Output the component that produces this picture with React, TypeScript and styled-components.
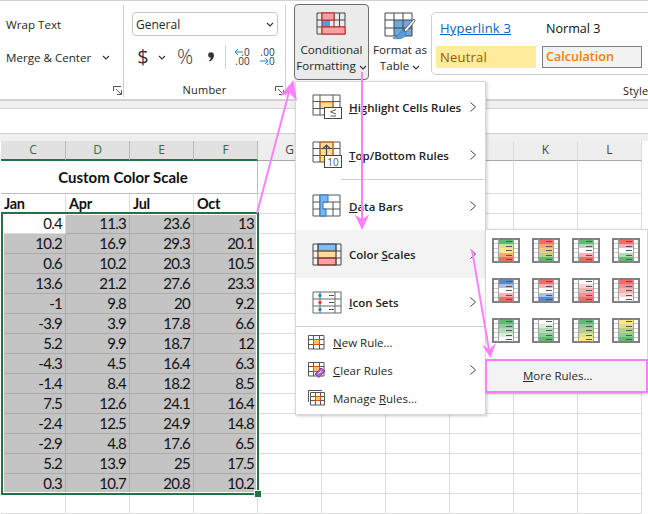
import React from "react";
import styled, { createGlobalStyle } from "styled-components";

const GlobalStyle = createGlobalStyle`
  html, body { margin: 0; padding: 0; background: #fff; }
  #root { width: 648px; height: 514px; overflow: hidden; }
`;

const uiFont = `"Open Sans", "Noto Sans", sans-serif`;
const cellFont = `Lato, "Liberation Sans", sans-serif`;
const columns = "65px repeat(9, 64px)";

const Page = styled.div`
  position: relative;
  width: 648px;
  height: 514px;
  overflow: hidden;
  background: #fff;
  font-family: ${uiFont};
  font-size: 12px;
  color: #262626;
`;

/* ribbon */
const Ribbon = styled.div`
  display: flex;
  height: 101px;
  box-sizing: border-box;
  border-top: 1px solid #d2d2d2;
  border-bottom: 2px solid #d2d2d2;
`;

const Group = styled.div<{ $w: number; $divider?: boolean }>`
  position: relative;
  flex: none;
  box-sizing: border-box;
  width: ${(p) => p.$w}px;
  height: 92px;
  margin-top: 4px;
  border-right: ${(p) => (p.$divider ? "1px solid #d0d0d0" : "none")};
`;

const GroupLabel = styled.div`
  position: absolute;
  left: 0;
  right: 0;
  top: 78px;
  text-align: center;
  line-height: 14px;
  font-size: 11px;
  letter-spacing: 0.2px;
`;

const Launcher = styled.svg`
  position: absolute;
  right: 1px;
  top: 81px;
`;

const AlignRow = styled.div`
  display: flex;
  align-items: center;
  justify-content: space-between;
  height: 33px;
  padding: 0 13px 0 6px;
  white-space: nowrap;
  font-size: 11.6px;
  &:first-child { margin-top: 3px; }
`;

const NumberPane = styled.div`
  display: flex;
  flex-direction: column;
  padding: 7px 7px 0 8px;
`;

const Combo = styled.div`
  display: flex;
  align-items: center;
  justify-content: space-between;
  box-sizing: border-box;
  width: 146px;
  height: 24px;
  padding: 0 3px 0 3px;
  border: 1px solid #c6c6c6;
  border-radius: 4px;
`;

const NumberTools = styled.div`
  display: flex;
  align-items: center;
  height: 24px;
  margin-top: 9px;
`;

const ToolGlyph = styled.span<{ $w: number; $size: number; $light?: boolean }>`
  display: block;
  flex: none;
  width: ${(p) => p.$w}px;
  text-align: center;
  font-size: ${(p) => p.$size}px;
  font-weight: ${(p) => (p.$light ? 300 : 400)};
  line-height: 24px;
  color: #333;
`;

const CaretSlot = styled.span`
  display: flex;
  margin-left: 4px;
`;

const CommaSlot = styled.svg`
  flex: none;
  width: 14px;
  height: 24px;
`;

const ToolDivider = styled.span`
  flex: none;
  width: 1px;
  height: 24px;
  margin: 0 2px 0 7px;
  background: #d0d0d0;
`;

const Decimal = styled.span`
  position: relative;
  display: block;
  flex: none;
  width: 25px;
  height: 24px;
  font-size: 10px;
  line-height: 9px;
  text-align: right;
  padding-top: 3px;
  box-sizing: border-box;
  padding-right: 3px;
  color: #333;
  letter-spacing: 0.2px;
`;

const DecimalArrow = styled.svg<{ $low?: boolean }>`
  position: absolute;
  left: 6px;
  top: ${(p) => (p.$low ? 12 : 3)}px;
`;

const BigButton = styled.div<{ $active?: boolean; $w: number }>`
  display: flex;
  flex-direction: column;
  align-items: center;
  flex: none;
  box-sizing: border-box;
  width: ${(p) => p.$w}px;
  height: 76px;
  margin-top: 3px;
  border: 1px solid ${(p) => (p.$active ? "#6e6e6e" : "transparent")};
  border-radius: 4px;
  background: ${(p) => (p.$active ? "#ebebeb" : "transparent")};
  text-align: center;
  line-height: 16px;
  font-size: 11.6px;
  white-space: nowrap;
`;

const BigIconSlot = styled.div<{ $shift: number }>`
  height: 30px;
  margin: 7px ${(p) => p.$shift}px 0 0;
`;

const Gallery = styled.div`
  display: grid;
  grid-template-columns: 100px 100px;
  grid-template-rows: 30px 22px;
  row-gap: 3px;
  column-gap: 6px;
  align-items: center;
  flex: none;
  box-sizing: border-box;
  width: 260px;
  height: 63px;
  margin: 11px 0 0 3px;
  padding: 0 0 0 4px;
  border: 1px solid #cfcfcf;
  border-radius: 5px;
`;

const StyleLink = styled.span`
  justify-self: start;
  margin-left: 4px;
  font-size: 13px;
  color: #0563c1;
  text-decoration: underline;
  letter-spacing: 0.2px;
`;

const StyleNormal = styled.span`
  margin-left: 4px;
  font-size: 12.6px;
  color: #111;
`;

const StyleNeutral = styled.span`
  height: 22px;
  padding-left: 4px;
  line-height: 22px;
  font-size: 13px;
  background: #ffeb9c;
  color: #9c5700;
  letter-spacing: 0.2px;
`;

const StyleCalc = styled.span`
  box-sizing: border-box;
  height: 22px;
  padding-left: 3px;
  line-height: 20px;
  font-size: 12.6px;
  font-weight: 600;
  background: #f2f2f2;
  border: 1px solid #7f7f7f;
  color: #fa7d00;
`;

const StylesLabel = styled.span`
  position: absolute;
  left: 623px;
  top: 84px;
  font-size: 11px;
  line-height: 14px;
  letter-spacing: 0.2px;
`;

/* formula bar strip */
const Strip = styled.div<{ $h: number }>`
  height: ${(p) => p.$h}px;
  background: #f0f0f0;
`;

const FormulaBar = styled.div`
  box-sizing: border-box;
  height: 26px;
  border-top: 1px solid #d2d2d2;
  border-bottom: 1px solid #cfcfcf;
  background: #fff;
`;

/* sheet */
const Sheet = styled.div`
  padding-left: 1px;
`;

const ColHead = styled.div`
  display: grid;
  grid-template-columns: ${columns};
  height: 20px;
`;

const ColLabel = styled.div<{ $selected?: boolean }>`
  box-sizing: border-box;
  height: 20px;
  text-align: center;
  font-size: 12px;
  line-height: 18px;
  background: ${(p) => (p.$selected ? "#e1e1e1" : "#eeeeee")};
  color: ${(p) => (p.$selected ? "#217346" : "#444")};
  border-right: 1px solid ${(p) => (p.$selected ? "#b8b8b8" : "#dcdcdc")};
  border-bottom: ${(p) => (p.$selected ? "2px solid #217346" : "1px solid #a8a8a8")};
`;

const Row = styled.div<{ $h: number }>`
  display: grid;
  grid-template-columns: ${columns};
  height: ${(p) => p.$h}px;
`;

const Cell = styled.div<{ $filled?: boolean; $head?: boolean }>`
  box-sizing: border-box;
  padding: 0 3px;
  font-family: ${cellFont};
  font-size: ${(p) => (p.$head ? 14.5 : 15)}px;
  letter-spacing: ${(p) => (p.$head ? -0.3 : -0.7)}px;
  line-height: 19px;
  color: #111;
  overflow: hidden;
  text-align: ${(p) => (p.$head ? "left" : "right")};
  font-weight: ${(p) => (p.$head ? 700 : 400)};
  background: ${(p) => (p.$filled ? "#c4c4c4" : "#fff")};
  border-right: 1px solid ${(p) => (p.$filled ? "#ababab" : "#dcdcdc")};
  border-bottom: 1px solid ${(p) => (p.$filled ? "#ababab" : "#dcdcdc")};
`;

const TitleCell = styled.div`
  grid-column: span 4;
  box-sizing: border-box;
  padding-right: 12px;
  text-align: center;
  font-family: ${cellFont};
  font-weight: 700;
  font-size: 15px;
  line-height: 32px;
  color: #111;
  border-right: 1px solid #bdbdbd;
  border-bottom: 1px solid #bdbdbd;
`;

const Selection = styled.div`
  position: absolute;
  left: 1px;
  top: 212px;
  box-sizing: border-box;
  width: 258px;
  height: 283px;
  border: 2px solid #217346;
  box-shadow: inset 0 0 0 1px #fff;
  pointer-events: none;
`;

const FillHandle = styled.div`
  position: absolute;
  right: -5px;
  bottom: -5px;
  width: 6px;
  height: 6px;
  background: #217346;
  border: 1px solid #fff;
`;

/* menus */
const Menu = styled.div`
  position: absolute;
  left: 295px;
  top: 81px;
  box-sizing: border-box;
  width: 191px;
  height: 334px;
  padding-top: 1px;
  background: #fff;
  border: 1px solid #d8d8d8;
  box-shadow: 1px 1px 3px rgba(0, 0, 0, 0.22);
`;

const LargeItem = styled.div<{ $hover?: boolean }>`
  display: flex;
  align-items: center;
  height: 48px;
  padding: 0 8px 0 16px;
  background: ${(p) => (p.$hover ? "#f3f3f3" : "transparent")};
`;

const LargeLabel = styled.span`
  flex: 1;
  margin-left: 7px;
  font-weight: 600;
  font-size: 11.5px;
  color: #222;
  white-space: nowrap;
`;

const SmallItem = styled.div`
  display: flex;
  align-items: center;
  height: 28px;
  padding: 0 8px 0 12px;
`;

const SmallLabel = styled.span`
  flex: 1;
  margin-left: 8px;
  font-size: 11.5px;
  color: #262626;
`;

const Key = styled.span`
  text-decoration: underline;
`;

const SepShort = styled.div`
  height: 1px;
  margin-left: 45px;
  margin-bottom: 2px;
  background: #d0d0d0;
`;

const SepFull = styled.div`
  height: 1px;
  margin-bottom: 1px;
  background: #d0d0d0;
`;

const SubMenu = styled.div`
  position: absolute;
  left: 485px;
  top: 229px;
  box-sizing: border-box;
  width: 163px;
  height: 164px;
  background: #fff;
  border: 1px solid #d8d8d8;
  box-shadow: 1px 1px 3px rgba(0, 0, 0, 0.22);
`;

const ScaleGrid = styled.div`
  display: grid;
  grid-template-columns: repeat(4, 28px);
  grid-auto-rows: 25px;
  gap: 15px 12px;
  padding: 8px 0 0 6px;
`;

const MoreRules = styled.div`
  position: absolute;
  left: -1px;
  bottom: -1px;
  box-sizing: border-box;
  width: 163px;
  height: 34px;
  padding-left: 36px;
  line-height: 30px;
  font-size: 11.5px;
  background: #f3f3f3;
  border: 2px solid #ff80ff;
`;

const Overlay = styled.svg`
  position: absolute;
  left: 0;
  top: 0;
  pointer-events: none;
`;

/* drawings */
const Chevron = () => (
  <svg width="8" height="12" viewBox="0 0 8 12" fill="none" stroke="#444" strokeWidth="1">
    <path d="M1.5 1.5 L6.5 6 L1.5 10.5" />
  </svg>
);

const Caret = () => (
  <svg width="8" height="5" viewBox="0 0 8 5" fill="none" stroke="#333" strokeWidth="1.1">
    <path d="M1 1 L4 4 L7 1" />
  </svg>
);

const LauncherIcon = () => (
  <Launcher width="9" height="9" viewBox="0 0 9 9" fill="none" stroke="#555" strokeWidth="1">
    <path d="M0.5 5 V0.5 H8 M3 3 L8 8 M8.5 4 V8.5 H4" />
  </Launcher>
);

const CondIcon = () => (
  <svg width="30" height="23" viewBox="0 0 30 23">
    <rect x="6" y="8" width="8" height="7" fill="#5b9bd5" />
    <path d="M1 1 H29 V22 H1 Z M1 8 H29 M1 15 H29 M6 1 V22 M18 1 V22 M23.5 1 V22" fill="none" stroke="#444" strokeWidth="1" />
    <rect x="6" y="1" width="12" height="7" fill="#ff9ea5" stroke="#d81b1b" />
    <rect x="6" y="15" width="23" height="7" fill="#ff9ea5" stroke="#d81b1b" />
  </svg>
);

const TableIcon = () => (
  <svg width="32" height="28" viewBox="0 0 32 28">
    <rect x="10" y="8" width="18" height="16" fill="#6fa8dc" />
    <path d="M1 1 H28 V24 H1 Z M1 8 H28 M1 16 H28 M10 1 V24 M19 1 V24" fill="none" stroke="#444" strokeWidth="1" />
    <path d="M30 7 L20 18 L22 20 L31 9 Z" fill="#fff" stroke="#666" strokeWidth="1" />
    <path d="M19 18 C15 20 16 24 9 26 C15 28 22 26 22 21 Z" fill="#5b9bd5" stroke="#2e75b6" strokeWidth="0.7" />
  </svg>
);

const Grid3 = "M1 1 H28 V21 H1 Z M1 7.5 H28 M1 14.5 H28 M8 1 V21 M21 1 V21";

const HighlightIcon = () => (
  <svg width="30" height="26" viewBox="0 0 30 26">
    <rect x="8" y="8" width="13" height="7" fill="#fcdc97" />
    <path d={Grid3} fill="none" stroke="#555" />
    <path d="M8 14 V8 H21 V14" fill="none" stroke="#d9730d" />
    <rect x="12.5" y="13.5" width="17" height="11" fill="#fff" stroke="#444" />
    <path d="M24 15.5 L18.5 17.8 L24 20 M18.5 22 H24" fill="none" stroke="#555" />
  </svg>
);

const TopBottomIcon = () => (
  <svg width="30" height="28" viewBox="0 0 30 28">
    <rect x="8" y="1" width="13" height="20" fill="#fcdc97" />
    <path d={Grid3} fill="none" stroke="#555" />
    <path d="M8 21 V1 H21 V14" fill="none" stroke="#d9730d" />
    <path d="M14.5 14 V4 M10.5 8 L14.5 4 L18.5 8" fill="none" stroke="#444" strokeWidth="1.2" />
    <rect x="12.5" y="14.5" width="17" height="12" fill="#fff" stroke="#444" />
    <text x="21" y="24.5" textAnchor="middle" fontSize="10" fontFamily="Open Sans" fill="#555">10</text>
  </svg>
);

const DataBarIcon = () => (
  <svg width="30" height="24" viewBox="0 0 30 24">
    <path d="M1 1 H28 V22 H1 Z M1 8 H28 M1 15 H28 M8 1 V22 M21 8 V22" fill="none" stroke="#555" />
    <path d="M6 1 H14 V8 H9 V15 H12 V22 H6 Z" transform="translate(2 0)" fill="#7db6ea" stroke="#1f77c4" />
  </svg>
);

const ColorScaleIcon = () => (
  <svg width="30" height="23" viewBox="0 0 30 23">
    <rect x="6" y="1" width="18" height="7" fill="#84bbec" stroke="#1f77c4" />
    <rect x="6" y="8" width="18" height="7" fill="#fcdc97" stroke="#ea9a2a" />
    <rect x="6" y="15" width="18" height="7" fill="#ff9ea5" stroke="#d81b1b" />
    <path d="M1 1 H29 V22 H1 Z M1 8 H29 M1 15 H29 M6 1 V22 M24 1 V22" fill="none" stroke="#444" />
  </svg>
);

const IconSetIcon = () => (
  <svg width="30" height="23" viewBox="0 0 30 23">
    <path d="M1 1 H29 V22 H1 Z M1 8 H29 M1 15 H29 M8 1 V22 M23 1 V22" fill="none" stroke="#666" />
    <circle cx="8" cy="4.5" r="1.7" fill="#1e88d2" />
    <circle cx="8" cy="11.5" r="1.7" fill="#e83a3a" />
    <circle cx="8" cy="18.5" r="1.7" fill="#1e88d2" />
    <path d="M17 4.5 H22 M17 11.5 H22 M17 18.5 H22" stroke="#555" />
  </svg>
);

const NewRuleIcon = () => (
  <svg width="17" height="15" viewBox="0 0 17 15">
    <path d="M0.5 0.5 H16 V14 H0.5 Z M0.5 4.5 H16 M0.5 9.5 H16 M5.5 0.5 V14 M11.5 0.5 V14" fill="none" stroke="#555" />
    <rect x="5.5" y="4.5" width="6" height="5" fill="#fbc46a" stroke="#e0560f" />
  </svg>
);

const ClearRuleIcon = () => (
  <svg width="17" height="16" viewBox="0 0 17 16">
    <path d="M0.5 0.5 H16 V14 H0.5 Z M0.5 4.5 H16 M0.5 9.5 H16 M5.5 0.5 V14 M11.5 0.5 V14" fill="none" stroke="#555" />
    <rect x="5.5" y="4.5" width="6" height="5" fill="#fbc46a" stroke="#e0560f" />
    <path d="M7 12 L13 6 L17 9 L11 15.5 Z" fill="#b565c4" stroke="#7d3a96" />
    <path d="M10.5 11.5 L13.5 9" stroke="#fff" />
  </svg>
);

const ManageIcon = () => (
  <svg width="17" height="16" viewBox="0 0 17 16">
    <path d="M0.5 12 V0.5 H14" fill="none" stroke="#555" />
    <path d="M2.5 2.5 H16.5 V15 H2.5 Z M2.5 6.5 H16.5 M2.5 10.5 H16.5 M7.5 2.5 V15 M12.5 2.5 V15" fill="none" stroke="#555" />
    <rect x="7.5" y="6.5" width="5" height="4" fill="#fbc46a" stroke="#e0560f" />
  </svg>
);

const ScaleIcon = ({ colors }: { colors: string[] }) => (
  <svg width="28" height="25" viewBox="0 0 28 25" shapeRendering="crispEdges">
    <path d="M1 5.5 H27 M1 10.5 H27 M1 14.5 H27 M1 19.5 H27" stroke="#c8c8c8" strokeWidth="1" />
    {colors.map((c, i) => (
      <rect key={i} x="7" y={1 + i * 4.6} width="14" height="4.6" fill={c} />
    ))}
    <path d="M1 1 H27 V24 H1 Z" fill="none" stroke="#808080" strokeWidth="1.5" />
    <path d="M6.5 1 V24 M21.5 1 V24" fill="none" stroke="#a0a0a0" strokeWidth="1" />
    {colors.map((_, i) => (
      <path key={i} d={`M14 ${3.5 + Math.round(i * 4.6)} H20`} stroke="#555" strokeWidth="1" />
    ))}
  </svg>
);

const G = "#5fb878", GM = "#8ccb9c", GL = "#b2dab4", GXL = "#d9edda";
const R = "#f86a6a", P1 = "#f88f90", P2 = "#f8b0b2", P3 = "#f9d3d4";
const B = "#5a88c8", BL = "#a8c0e2", W = "#ffffff";
const Y = "#ffe784", O = "#f8a971", OL = "#f2c782", LG = "#b4d27f", YG = "#d9e28e", LG2 = "#cde2a0";

const scales = [
  [G, LG2, Y, O, R],
  [R, O, OL, LG, G],
  [G, GL, W, P2, R],
  [R, P2, W, GL, G],
  [B, BL, W, P2, R],
  [R, P2, W, BL, B],
  [W, P3, P2, P1, R],
  [R, P1, P2, P3, W],
  [G, GM, GL, GXL, W],
  [W, GXL, GL, GM, G],
  [G, GM, LG, YG, Y],
  [Y, YG, LG, GM, G],
];

const jan = ["0.4", "10.2", "0.6", "13.6", "-1", "-3.9", "5.2", "-4.3", "-1.4", "7.5", "-2.4", "-2.9", "5.2", "0.3"];
const apr = ["11.3", "16.9", "10.2", "21.2", "9.8", "3.9", "9.9", "4.5", "8.4", "12.6", "12.5", "4.8", "13.9", "10.7"];
const jul = ["23.6", "29.3", "20.3", "27.6", "20", "17.8", "18.7", "16.4", "18.2", "24.1", "24.9", "17.6", "25", "20.8"];
const oct = ["13", "20.1", "10.5", "23.3", "9.2", "6.6", "12", "6.3", "8.5", "16.4", "14.8", "6.5", "17.5", "10.2"];

const blanks = (n: number) => Array.from({ length: n }, (_, i) => <Cell key={`b${i}`} />);

const App = () => {
  return (
    <Page>
      <GlobalStyle />
      <Ribbon>
        <Group $w={124} $divider>
          <AlignRow>Wrap Text</AlignRow>
          <AlignRow>Merge &amp; Center <Caret /></AlignRow>
          <LauncherIcon />
        </Group>
        <Group $w={162} $divider>
          <NumberPane>
            <Combo>General <Caret /></Combo>
            <NumberTools>
              <ToolGlyph $w={22} $size={20}>$</ToolGlyph>
              <CaretSlot><Caret /></CaretSlot>
              <ToolGlyph $w={38} $size={20} $light>%</ToolGlyph>
              <CommaSlot viewBox="0 0 14 24">
                <circle cx="7" cy="10" r="2.8" fill="#333" />
                <path d="M9.8 10 C10 13 8.5 15.5 5.5 16.5 L5 15.5 C6.5 14.5 7 13 7 11.5 Z" fill="#333" />
              </CommaSlot>
              <ToolDivider />
              <Decimal>
                .0<br />.00
                <DecimalArrow width="10" height="8" viewBox="0 0 10 8" fill="none" stroke="#1e88d2">
                  <path d="M9 4 H1 M4 1 L1 4 L4 7" />
                </DecimalArrow>
              </Decimal>
              <Decimal>
                .00<br />.0
                <DecimalArrow $low width="10" height="8" viewBox="0 0 10 8" fill="none" stroke="#1e88d2">
                  <path d="M1 4 H9 M6 1 L9 4 L6 7" />
                </DecimalArrow>
              </Decimal>
            </NumberTools>
          </NumberPane>
          <GroupLabel>Number</GroupLabel>
          <LauncherIcon />
        </Group>
        <Group $w={8} />
        <BigButton $w={75} $active>
          <BigIconSlot $shift={2}><CondIcon /></BigIconSlot>
          Conditional
          <span>Formatting <Caret /></span>
        </BigButton>
        <Group $w={3} />
        <BigButton $w={56}>
          <BigIconSlot $shift={0}><TableIcon /></BigIconSlot>
          Format as
          <span>Table <Caret /></span>
        </BigButton>
        <Gallery>
          <StyleLink>Hyperlink 3</StyleLink>
          <StyleNormal>Normal 3</StyleNormal>
          <StyleNeutral>Neutral</StyleNeutral>
          <StyleCalc>Calculation</StyleCalc>
        </Gallery>
        <StylesLabel>Styles</StylesLabel>
      </Ribbon>
      <Strip $h={7} />
      <FormulaBar />
      <Strip $h={7} />
      <Sheet>
        <ColHead>
          {["C", "D", "E", "F"].map((c) => <ColLabel key={c} $selected>{c}</ColLabel>)}
          {/* H, I and J sit behind the open menu */}
          {["G", "", "", "", "K", "L"].map((c, i) => <ColLabel key={i}>{c}</ColLabel>)}
        </ColHead>
        <Row $h={33}>
          <TitleCell>Custom Color Scale</TitleCell>
          {blanks(6)}
        </Row>
        <Row $h={20}>
          {["Jan", "Apr", "Jul", "Oct"].map((m) => <Cell key={m} $head>{m}</Cell>)}
          {blanks(6)}
        </Row>
        {jan.map((v, i) => (
          <Row key={i} $h={20}>
            <Cell $filled={i > 0}>{v}</Cell>
            <Cell $filled>{apr[i]}</Cell>
            <Cell $filled>{jul[i]}</Cell>
            <Cell $filled>{oct[i]}</Cell>
            {blanks(6)}
          </Row>
        ))}
        <Row $h={20}>{blanks(10)}</Row>
      </Sheet>
      <Selection><FillHandle /></Selection>

      <Menu>
        <LargeItem><HighlightIcon /><LargeLabel><Key>H</Key>ighlight Cells Rules</LargeLabel><Chevron /></LargeItem>
        <LargeItem><TopBottomIcon /><LargeLabel><Key>T</Key>op/Bottom Rules</LargeLabel><Chevron /></LargeItem>
        <SepShort />
        <LargeItem><DataBarIcon /><LargeLabel><Key>D</Key>ata Bars</LargeLabel><Chevron /></LargeItem>
        <LargeItem $hover><ColorScaleIcon /><LargeLabel>Color <Key>S</Key>cales</LargeLabel><Chevron /></LargeItem>
        <LargeItem><IconSetIcon /><LargeLabel><Key>I</Key>con Sets</LargeLabel><Chevron /></LargeItem>
        <SepFull />
        <SmallItem><NewRuleIcon /><SmallLabel><Key>N</Key>ew Rule...</SmallLabel></SmallItem>
        <SmallItem><ClearRuleIcon /><SmallLabel><Key>C</Key>lear Rules</SmallLabel><Chevron /></SmallItem>
        <SmallItem><ManageIcon /><SmallLabel>Manage <Key>R</Key>ules...</SmallLabel></SmallItem>
      </Menu>

      <SubMenu>
        <ScaleGrid>
          {scales.map((s, i) => <ScaleIcon key={i} colors={s} />)}
        </ScaleGrid>
        <MoreRules><Key>M</Key>ore Rules...</MoreRules>
      </SubMenu>

      <Overlay width="648" height="514" viewBox="0 0 648 514">
        <g stroke="#ff80ff" strokeWidth="2" fill="none">
          <path d="M257 213 L289 92" />
          <path d="M362 72 L362 220" />
          <path d="M472 250 L489 350" />
        </g>
        <g fill="#ff80ff">
          <path d="M293.5 80 L297 101 L289.5 93 L280 96 Z" />
          <path d="M362 230 L355 215 L362 219 L369 215 Z" />
          <path d="M490.5 358 L482 345 L489.5 349 L496 343 Z" />
        </g>
      </Overlay>
    </Page>
  );
};

export default App;
